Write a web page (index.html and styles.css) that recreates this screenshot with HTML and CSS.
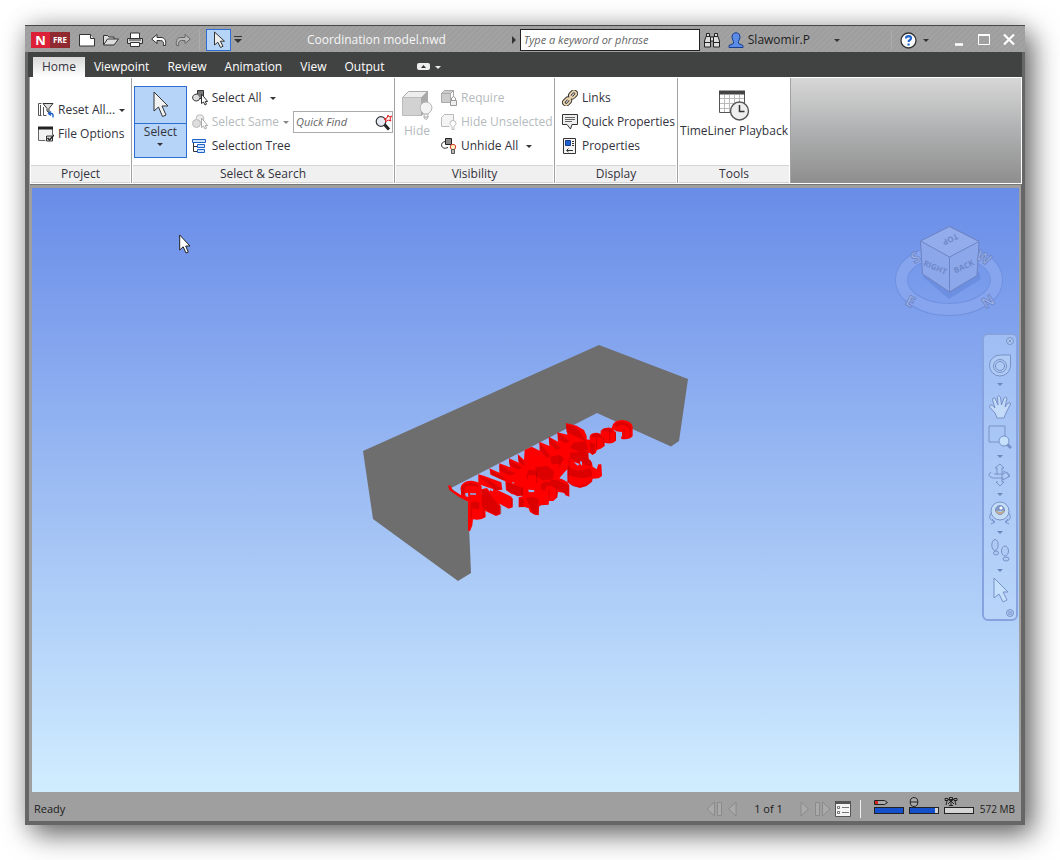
FILE: index.html
```html
<!DOCTYPE html>
<html lang="en">
<head>
<meta charset="utf-8">
<title>Coordination model.nwd</title>
<link rel="stylesheet" href="styles.css">
</head>
<body>
<div class="window">
  <header class="titlebar">
    <div class="logo"><b>N</b><span>FRE</span></div>
    <div class="quick">
      <button aria-label="New"><svg width="16" height="16" viewBox="0 0 16 16"><path d="M.5 2.500h11l4 4v7.500h-15z" fill="#fff" stroke="#333"/><path d="M11.500 2.500v4h4" fill="#ddd" stroke="#333"/></svg></button>
      <button aria-label="Open"><svg width="16" height="16" viewBox="0 0 16 16"><path d="M.5 12.500v-9h4l1.500 1.500h5v2" fill="#ddd" stroke="#333"/><path d="M.5 13l4-6h11l-4.500 6z" fill="#ddd" stroke="#333"/></svg></button>
      <button aria-label="Print"><svg width="16" height="16" viewBox="0 0 16 16"><path d="M3.500 6v-5h9v5" fill="#fff" stroke="#333"/><path d="M.5 6.500h15v5h-15z" fill="#ddd" stroke="#333"/><path d="M3.500 10.500h9v4h-9z" fill="#fff" stroke="#333"/><path d="M2 8h12" stroke="#333"/></svg></button>
      <button aria-label="Undo"><svg width="16" height="16" viewBox="0 0 16 16"><path d="M.7 7L6 2.500v3h4c3.500 0 5.500 3 4.500 8h-2c.5-3-.5-5-3-5H6v3z" fill="#fff" stroke="#333"/></svg></button>
      <button aria-label="Redo"><svg width="16" height="16" viewBox="0 0 16 16"><path d="M15.300 7L10 2.500v3H6c-3.500 0-5.500 3-4.500 8h2c-.5-3 .5-5 3-5H10v3z" fill="#bbb" stroke="#666"/></svg></button>
      <i class="bar-sep"></i>
      <button class="picked" aria-label="Select"><svg width="14" height="18" viewBox="0 0 14 18"><path d="M2.500 1v13l3.300-2.800 2.700 5.300 2.500-1.200-2.600-5.100H12.500z" fill="#eee" stroke="#333"/></svg></button>
      <button class="more" aria-label="Customize"><svg width="8" height="8" viewBox="0 0 8 8"><path d="M0 .5h8" stroke="#333"/><path d="M0 3h8L4 7z" fill="#333"/></svg></button>
    </div>
    <div class="doc-title">Coordination model.nwd</div>
    <svg class="tri" width="6" height="8" viewBox="0 0 6 8"><path d="M1 0l4 4-4 4z" fill="#333"/></svg>
    <input class="search" type="text" aria-label="Search" placeholder="Type a keyword or phrase">
    <button class="find" aria-label="Find"><svg width="16" height="16" viewBox="0 0 16 16"><g fill="#ddd" stroke="#222"><path d="M2.500 4.500v-3h3v3M10.500 4.500v-3h3v3M6.500 5h3v4h-3z"/><path d="M2 4.500h4.500v10.500H.5V9zM9.500 4.500H14L15.500 9v6h-6z"/><path d="M.5 10.500h6M9.500 10.500h6"/></g></svg></button>
    <button class="user"><svg width="16" height="16" viewBox="0 0 16 16"><path d="M5.500 9.500Q3 5.500 4.500 2.500 8-1 11.500 2.500 13 5.500 10.500 9.500v2l4.500 2v2H1v-2l4.500-2z" fill="#5b8de8" stroke="#173e8d"/></svg><span>Slawomir.P</span><i class="caret"></i></button>
    <i class="bar-sep"></i>
    <button class="help" aria-label="Help"><svg width="17" height="17" viewBox="0 0 17 17"><circle cx="8.500" cy="8.500" r="7.500" fill="#fff" stroke="#333" stroke-width="1.300"/><path d="M6 6.500Q6.200 4.200 8.600 4.200 11 4.300 11 6.300 11 7.500 9.500 8.200 8.600 8.700 8.600 10M8.600 11.500v2" fill="none" stroke="#2164cc" stroke-width="2.200"/></svg><i class="caret"></i></button>
    <div class="win-buttons">
      <button aria-label="Minimize"><svg width="14" height="14" viewBox="0 0 14 14"><path d="M3 11.500h8" stroke="#fff" stroke-width="2.500"/></svg></button>
      <button aria-label="Maximize"><svg width="14" height="14" viewBox="0 0 14 14"><path d="M1.500 2.500h11v9h-11z" fill="none" stroke="#fff"/><path d="M1 2h12" stroke="#fff" stroke-width="2"/></svg></button>
      <button aria-label="Close"><svg width="14" height="14" viewBox="0 0 14 14"><path d="M2 1.500l10 10M12 1.500l-10 10" stroke="#fff" stroke-width="2.200"/></svg></button>
    </div>
  </header>

  <nav class="tabs">
    <button class="active">Home</button><button>Viewpoint</button><button>Review</button><button>Animation</button><button>View</button><button>Output</button>
    <button class="collapse" aria-label="Minimize ribbon"><svg width="24" height="8" viewBox="0 0 24 8"><rect width="13" height="7" rx="2" fill="#eee"/><path d="M4 5l2.500-3L9 5z" fill="#333"/><path d="M18 3h6l-3 3z" fill="#eee"/></svg></button>
  </nav>

  <section class="ribbon">
    <div class="panel">
      <div class="tools project">
        <div class="stack">
          <button class="tool"><svg width="16" height="16" viewBox="0 0 16 16"><path d="M3.500 1.500h-3v12h3M2.500 3v10" fill="none" stroke="#555"/><path d="M5 1.500h10L11 6.500v4l-2-1.500V6.500z" fill="#ddd" stroke="#333"/><path d="M5.500 5v8.500h3" fill="none" stroke="#555"/><path d="M13 9.500l-2.500 2 2.500 2M10.500 11.500h3q2 0 1.500 4" fill="none" stroke="#1f62c9" stroke-width="1.400"/></svg>Reset All...<i class="caret"></i></button>
          <button class="tool"><svg width="16" height="16" viewBox="0 0 16 16"><path d="M.5 1.500h14v13h-14z" fill="#f2f2f2" stroke="#666"/><path d="M0 2h15" stroke="#222" stroke-width="3"/><path d="M7 9h8.500v7H8.500L7 14z" fill="#fff"/><path d="M8.500 10h6v5h-6z" fill="#ddd" stroke="#333"/><path d="M9.500 12l2 2L16 9" fill="none" stroke="#222" stroke-width="1.500"/></svg>File Options</button>
        </div>
      </div>
      <h2>Project</h2>
    </div>
    <div class="panel">
      <div class="tools">
        <button class="big selected"><span class="big-icon"><svg width="18" height="28" viewBox="0 0 18 28"><path d="M3 1v19l4.500-4 4 9.500 3.500-1.500-4-9h6z" fill="#f2f2f2" stroke="#333"/></svg></span><span class="big-label">Select</span><i class="caret"></i></button>
        <div class="stack">
          <button class="tool"><svg width="16" height="16" viewBox="0 0 16 16"><path d="M5.500.5h6v8h-6z" fill="#777" stroke="#333"/><path d="M5 4Q0 4.500.7 8.500 2 12 6.500 10.500L8 8" fill="#ddd" stroke="#333"/><path d="M9.500 4v9.500l2-1.500 1.500 3 1.500-.8-1.300-2.700h2.500z" fill="#fff" stroke="#333"/></svg>Select All<i class="caret"></i></button>
          <div class="pair">
            <button class="tool" disabled><svg width="16" height="16" viewBox="0 0 16 16"><circle cx="8" cy="4.500" r="3.800" fill="#eee" stroke="#bbb"/><circle cx="4.500" cy="9.500" r="4" fill="#ddd" stroke="#bbb"/><path d="M9.500 4v9.500l2-1.500 1.500 3 1.500-.8-1.300-2.700h2.500z" fill="#fff" stroke="#aaa"/></svg>Select Same<i class="caret"></i></button>
            <div class="quick-find"><input type="text" aria-label="Quick Find" placeholder="Quick Find"><button aria-label="Run quick find"><svg width="17" height="17" viewBox="0 0 17 17"><path d="M9 10l5 5.500" stroke="#222" stroke-width="3"/><circle cx="6" cy="7.500" r="4.800" fill="#e6eaf2" stroke="#333" stroke-width="1.200"/><path d="M9 5l3-1 1-3 1 2 2.500-1-1.500 3 1 2-3-1-2.500 2 .5-3z" fill="#fff" stroke="#e02020"/></svg></button></div>
          </div>
          <button class="tool"><svg width="16" height="16" viewBox="0 0 16 16"><path d="M1.500 4v9.500h4M1.500 8.500h4" fill="none" stroke="#333"/><g fill="#cfe4ff" stroke="#1f62c9"><path d="M.5 1.500h13v3H.5zM5.500 6.500h7v3h-7zM5.500 11.500h7v3h-7z"/></g></svg>Selection Tree</button>
        </div>
      </div>
      <h2>Select &amp; Search</h2>
    </div>
    <div class="panel">
      <div class="tools visibility">
        <button class="big" disabled><span class="big-icon"><svg width="32" height="32" viewBox="0 0 32 32"><path d="M1.500 8.500l6-6h19l-6 6z" fill="#eee" stroke="#aaa"/><path d="M1.500 8.500h19v18h-19z" fill="#d2d2d2" stroke="#bbb"/><path d="M20.500 8.500l6-6v18l-6 6z" fill="#aaa" stroke="#aaa"/><path d="M23 25q-4-3-4-6a6 6 0 0 1 12 0q0 3-4 6v4q-2 3-4 0z" fill="#f3f3f3" stroke="#b5b5b5"/><path d="M23 25h4M23 28h4" stroke="#aaa"/></svg></span><span class="big-label">Hide</span></button>
        <div class="stack">
          <button class="tool" disabled><svg width="16" height="16" viewBox="0 0 16 16"><path d="M.5 3.500l3-3h9l-3 3zM.5 3.500h9v9h-9z" fill="#ccc" stroke="#aaa"/><path d="M9.500 3.500l3-3v6" fill="none" stroke="#aaa"/><path d="M10.500 10V8q2-3 4 0v2" fill="none" stroke="#999"/><path d="M9.500 10.500h6v5h-6z" fill="#eee" stroke="#999"/></svg>Require</button>
          <button class="tool" disabled><svg width="16" height="16" viewBox="0 0 16 16"><path d="M8.500 12.500h-8v-9l3-3h9v6" fill="#f4f4f4" stroke="#bbb"/><path d="M11 12.500q-2-2-2-3a3 3 0 0 1 6 0q0 1-2 3v3h-2z" fill="#fff" stroke="#bbb"/></svg>Hide Unselected</button>
          <button class="tool"><svg width="16" height="16" viewBox="0 0 16 16"><path d="M4.500.5h6v6h-6z" fill="#888" stroke="#222"/><path d="M4 3.500Q0 4.500.6 8 2 11.500 7 9.500" fill="none" stroke="#333"/><circle cx="12" cy="9" r="2.700" fill="#fff3c0" stroke="#d23b2a"/><path d="M10.500 11.500h3v4h-3z" fill="#bbb" stroke="#555"/></svg>Unhide All<i class="caret"></i></button>
        </div>
      </div>
      <h2>Visibility</h2>
    </div>
    <div class="panel">
      <div class="tools display">
        <div class="stack">
          <button class="tool"><svg width="16" height="16" viewBox="0 0 16 16"><g fill="none" stroke="#333" stroke-width="3.600"><rect x="7.500" y="2.300" width="7" height="4.500" rx="2.200" transform="rotate(-45 11 4.500)"/><rect x="1.500" y="9.300" width="7" height="4.500" rx="2.200" transform="rotate(-45 5 11.500)"/><path d="M6 10l4-4"/></g><g fill="none" stroke="#ecd6b0" stroke-width="1.800"><rect x="7.500" y="2.300" width="7" height="4.500" rx="2.200" transform="rotate(-45 11 4.500)"/><rect x="1.500" y="9.300" width="7" height="4.500" rx="2.200" transform="rotate(-45 5 11.500)"/><path d="M6 10l4-4"/></g></svg>Links</button>
          <button class="tool"><svg width="16" height="16" viewBox="0 0 16 16"><path d="M.5.500h15v10H10L8.500 15 5 10.500H.5z" fill="#eee" stroke="#333"/><path d="M3 3.500h10M3 5.500h10M3 7.500h7" stroke="#666"/></svg>Quick Properties</button>
          <button class="tool"><svg width="16" height="16" viewBox="0 0 16 16"><path d="M1.500.500h12v15h-12z" fill="#f4f4f4" stroke="#333"/><path d="M3.500 2.500h5v5h-5z" fill="#1f5fd0" stroke="#173e8d"/><path d="M10 3.500h2M10 5.500h2M10 7.500h2M5 12.500h6M6.500 10.500l-2 2 2 1.500" fill="none" stroke="#333"/></svg>Properties</button>
        </div>
      </div>
      <h2>Display</h2>
    </div>
    <div class="panel">
      <div class="tools timeliner">
        <button class="big"><span class="big-icon"><svg width="32" height="32" viewBox="0 0 32 32"><path d="M1.500 2.500h25v21h-25z" fill="#fff" stroke="#555"/><path d="M1 3.500h26" stroke="#444" stroke-width="4"/><path d="M2 9.500h24M2 14.500h24M2 19.500h24M6.500 6v17M11.500 6v17M16.500 6v17M21.500 6v17" stroke="#bbb"/><circle cx="21.500" cy="22" r="9" fill="#eee" stroke="#555" stroke-width="1.400"/><path d="M21.500 16v6.500h5" fill="none" stroke="#333" stroke-width="1.500"/></svg></span><span class="big-label">TimeLiner Playback</span></button>
      </div>
      <h2>Tools</h2>
    </div>
    <div class="filler"></div>
  </section>

  <main class="view">
    <svg class="scene" viewBox="32 188 987 604" role="img" aria-label="3D model">
      <path fill="#6e6e6e" d="M363 451L599 345 688 379 679 441 671 446.500 597 413 451 488 468 502 471 573 458 581 373 519z"/>
      <g transform="translate(440 410) scale(.33333)">
        <g fill="#f00">
          <path d="M24 226l8 1 5 12 26 16V228q8-16 32-16 26 2 30 18l-1 20 8 7 3 22 2 42q-16 12-38 7l-2 18-7 18-6-3V275L52 258 28 240z"/>
          <path d="M115 193l16 4 53 20 3 22-19 2-53-19z"/>
          <path d="M123 238l18-4 40 52v27l-13 5-38-18zM155 232l59 28 4 6v26l-12 4-64-34z"/>
          <path d="M148 175L178 188V160L210 172 207 145 237 158 233 132 252 150 254 120 275 110 299 122 298 95 328 108 326 80 354 95 352 67 382 74 378 39 410 47 432 60 440 78V88L450 90 466 100 470 122 458 134 448 128 444 130 446 146 456 158 458 170 470 178 475 163 484 163 486 198 476 205 458 206 456 215 440 228 420 234 395 226 382 215 380 180 360 203 382 216 388 226V260L376 256 374 248 354 246 352 262 340 273 327 273 326 284 303 286 297 290 296 316 284 314 270 306 266 295 252 290 236 292V262L250 258 215 252 198 240 196 214 152 194z"/>
          <path d="M449 100V80q2-12 22-12l23 8v32q-13 11-24 12l-2 8-10 6-6-7-6-24zM482 72V62q16-14 34-8l12 14v24q-12 12-32 7L482 88zM516 51q4-21 31-21 29 3 31 20v28q-10 13-34 9l-4-21-10-2-14-8z"/>
        </g>
        <g fill="#dc0000">
          <path d="M66 229q10-12 30-10 20 2 22 13-22-10-44 0l-1 24-8-2zM115 197l30 12 40 28-18 4zM124 240l15-1 40 50v23l-12 4-40-23zM150 179l48 28-8 4-38-18zM178 164l50 28-20 4-28-14zM207 149l40 24-14 6-24-14zM235 136l18 20v14l-18-16zM299 98l32 40-10 6-20-22zM328 81l34 34-14 4-20-20zM354 68l36 26-14 6-22-14zM378 43q42 8 54 42l8 10-18-9-42-20z"/>
          <path d="M400 98l38-4 6 26-22 6-32-12zM390 128l55-4v34l-30 0-24-14zM330 140l30-6 14 13-13 15-26 1zM286 172l36-4 20 16-3 22-30 6-24-16zM199 217l20 6 28 10 3 23-18 3-32-18zM258 264l21-4 17 8-1 46-16-3-10-22zM332 208l26 4 28 16v29l-10-5-20-13-28-14zM382 170q30 19 68 5l6 14v10q-28 12-72-4zM238 263l13 5v24l-14-2z"/>
          <path d="M455 74q17-8 31 3v8q-18-8-31-1zM487 57q17-6 30 4v8q-16-8-29-4zM523 43q13-13 35-5 15 6 12 20l-8-8q-17-10-32 1zM448 95l18 8-2 27-8 4-5-10zM302 224q16-16 34-5 14 2 18 15-14-11-36-4l-2 12-14-4zM263 181q13-5 24 3l-2 12-22-1zM93 276q13-4 26 4l-3 18-24-3zM434 152q15-8 20 4v12l-20-4z"/>
        </g>
        <path fill="#8fb2f0" d="M75 250l9-2 1 13-8-2zM90 250h18v4H90zM152 235l8 2-1 7-6-2zM264 239l18 1 1 6-16 1zM358 205l24-27v34zM401 156l18 6-6 5zM420 153l6 2v12l-5-5zM216 216l8 2-5 3zM538 65l8 1v13l-7 5z"/>
        <path fill="none" stroke="#a80000" stroke-width="1.500" d="M62 232q-1 17 14 20M94 296v30M131 298v24M182 288v24M216 266v26M247 232v24M290 184v35M262 190v16M327 238v30M349 231v33M385 169v48q30 30 69-5M360 141v33M388 144v30M470 82v35M490 82v25M509 62v34M526 65v24M552 57v29M571 52v28"/>
      </g>
    </svg>

    <svg class="pointer" width="12" height="20" viewBox="0 0 12 20"><path d="M.7 1v15l3.500-3.200L7 19l2.300-1-2.600-6H11z" fill="#fff" stroke="#222"/></svg>

    <svg class="cube" width="110" height="92" viewBox="894 225 110 92" role="img" aria-label="View cube">
      <ellipse cx="949" cy="280" rx="47.500" ry="29.500" fill="none" stroke="#6f91df" stroke-width="13"/>
      <ellipse cx="949" cy="280" rx="47.500" ry="29.500" fill="none" stroke="#87a5ee" stroke-width="11"/>
      <path d="M923 277l26 22 32-20-2-7-54-4z" fill="#5d81d5" opacity=".5"/>
      <path d="M949.500 226.500l29.500 15-2 34-27.500 16.500-27-18-2-32z" fill="#8da8ea" stroke="#6c83c4"/>
      <path d="M949.500 226.500l29.500 15-29.500 15.500-29-16z" fill="#93adec" stroke="#6c83c4"/><path d="M949.500 257v35" stroke="#6c83c4"/>
      <g fill="#6f88ca" class="cube-text"><text transform="translate(934 270) rotate(23)">RIGHT</text><text transform="translate(965 269) rotate(-25)">BACK</text><text transform="translate(949 237) rotate(153)">TOP</text></g>
      <g fill="#9db2e8" stroke="#6a83c6" stroke-width=".8" class="compass"><text transform="translate(908 306) rotate(28)">E</text><text transform="translate(991 306) rotate(-32)">N</text><text transform="translate(918 262) rotate(-30)">S</text><text transform="translate(981 262) rotate(30)">W</text></g>
    </svg>

    <div class="navbar">
      <button class="mini" aria-label="Close bar"><svg width="8" height="8" viewBox="0 0 8 8"><circle cx="4" cy="4" r="3.500"/><path d="M2.500 2.500l3 3M5.500 2.500l-3 3"/></svg></button>
      <button class="wheel" aria-label="Steering wheel"><svg width="24" height="24" viewBox="0 0 24 24"><path d="M12 1h10.500v11A10.500 10.500 0 1 1 12 1z"/><circle cx="12" cy="12" r="6.500"/><circle cx="12" cy="12" r="4.500"/></svg></button><i class="nav-caret"></i>
      <button class="pan" aria-label="Pan"><svg width="24" height="26" viewBox="0 0 24 26"><path d="M7 19L1.500 13q0-3 3-1.500L7 14 4.500 6q0-3 2.500-2L10 11 9.500 3q1-3 3 0l1 8L16 4q2-2 3 0l-2 9 3-4q3-1 2.500 1l-4.500 9-2 5H9z" fill="#c3daf8"/></svg></button>
      <button aria-label="Zoom window"><svg width="24" height="24" viewBox="0 0 24 24"><path d="M1 1h16v16H1z" fill="none"/><path d="M18 18l5 5" stroke-width="3"/><circle cx="16" cy="16" r="5" fill="#c5e0fa"/></svg></button><i class="nav-caret"></i>
      <button aria-label="Orbit"><svg width="24" height="24" viewBox="0 0 24 24"><path d="M9 12V5H7l5-4 4 4h-2v14h2l-4 4-4-4h2M3 9q-5 4 2 6h10v2l7-4-6-5v3H6M18 9q6 3 1 6" /></svg></button><i class="nav-caret"></i>
      <button aria-label="Look"><svg width="26" height="24" viewBox="0 0 26 24"><path d="M5 11q-6 7 3 10M5 18l3 3-4 2M21 11q6 7-3 10M21 18l-3 3 4 2" fill="none"/><circle cx="13" cy="10" r="9" fill="#c5dcf7"/><circle cx="13" cy="9" r="4.500" fill="#839bc5"/><path d="M9 10q4 5 8 0" stroke="#bda889" stroke-width="2"/><circle cx="14" cy="7" r="1.500" fill="#fff" stroke="none"/></svg></button><i class="nav-caret"></i>
      <button aria-label="Walk"><svg width="24" height="24" viewBox="0 0 24 24"><ellipse cx="7" cy="6" rx="3.200" ry="5.500"/><ellipse cx="8" cy="14" rx="2.500" ry="2"/><ellipse cx="17" cy="12" rx="3.500" ry="5"/><ellipse cx="18" cy="20" rx="3" ry="2"/></svg></button><i class="nav-caret"></i>
      <button aria-label="Select"><svg width="24" height="26" viewBox="0 0 24 26"><path d="M6 1v20l5-4 4 8 4-2-4-8h5z" fill="#c5e0fa"/></svg></button>
      <button class="mini" aria-label="Options"><svg width="8" height="8" viewBox="0 0 8 8"><circle cx="4" cy="4" r="3.500"/><path d="M2 3h4M2 5h4"/></svg></button>
    </div>
  </main>

  <footer class="status">
    <span class="ready">Ready</span>
    <div class="sheets">
      <button aria-label="First sheet"><svg width="16" height="16" viewBox="0 0 16 16"><path d="M8.500 1v14L1 8zM11.500 1.500h4v13h-4z"/></svg></button>
      <button aria-label="Previous sheet"><svg width="10" height="16" viewBox="0 0 10 16"><path d="M9 1v14L1.500 8z"/></svg></button>
      <span class="page">1 of 1</span>
      <button aria-label="Next sheet"><svg width="10" height="16" viewBox="0 0 10 16"><path d="M1 1v14L8.500 8z"/></svg></button>
      <button aria-label="Last sheet"><svg width="16" height="16" viewBox="0 0 16 16"><path d="M7.500 1v14L15 8zM.5 1.500h4v13h-4z"/></svg></button>
    </div>
    <button class="browser" aria-label="Sheet browser"><svg width="16" height="16" viewBox="0 0 16 16"><path d="M.5.500h15v15H.5z" fill="#f4f4f4" stroke="#555"/><path d="M0 1.500h16" stroke="#555" stroke-width="3"/><path d="M2.500 5.500h2v2h-2zM2.500 10.500h2v2h-2z" fill="#fff" stroke="#777"/><path d="M7 6.500h7M7 11.500h7" stroke="#777"/></svg></button>
    <i class="status-sep"></i>
    <div class="meters">
      <div class="meter"><svg width="14" height="10" viewBox="0 0 14 10"><path d="M.5 3.500h10l3 2-3 2H.5z" fill="#aaa" stroke="#222"/><path d="M1 4h3v3H1z" fill="#d22"/></svg><span><b style="width:100%"></b></span></div>
      <div class="meter"><svg width="14" height="10" viewBox="0 0 14 10"><ellipse cx="5" cy="5" rx="3.800" ry="4.400" fill="#aaa" stroke="#222"/><path d="M1 5h8" stroke="#222"/></svg><span><b style="width:90%"></b></span></div>
      <div class="meter"><svg width="14" height="10" viewBox="0 0 14 10"><path d="M1 1.500h3v2H1zM5.500.500h3v3h-3zM10 1.500h3v2h-3zM4 2.500h6M7 3v6M3 4l-1 4M11 4l1 4M7 4L4 7M7 4l3 3M5 8.500h4" fill="none" stroke="#222"/></svg><span><b style="width:0%"></b></span></div>
    </div>
    <span class="memory">572 MB</span>
  </footer>
</div>
</body>
</html>
```

FILE: styles.css
```css
* { box-sizing: border-box; }

body {
  margin: 0;
  min-height: 100vh;
  padding: 25px 35px 35px 25px;
  display: flex;
  background: #fff;
  font: 12px/16px "Open Sans", "Noto Sans", sans-serif;
  color: #33333d;
}

button {
  border: 0;
  padding: 0;
  background: none;
  font: inherit;
  color: inherit;
  display: flex;
  align-items: center;
}

svg { display: block; flex: none; }

.window {
  flex: 1;
  display: flex;
  flex-direction: column;
  background: #9f9f9f;
  border: solid #666;
  border-width: 0 4px 4px;
  box-shadow: 8px 10px 26px rgba(0, 0, 0, .55), 0 0 22px rgba(0, 0, 0, .18);
}

.caret {
  flex: none;
  border: 3px solid transparent;
  border-top-color: #333;
  border-bottom: 0;
}

/* Title bar */
.titlebar {
  display: flex;
  align-items: center;
  height: 27px;
  margin: 0 -4px;
  padding: 2px 9px 0 6px;
  border-top: 1px solid #484848;
  background: repeating-linear-gradient(135deg, #a2a2a2 0 2px, #9e9e9e 2px 4px);
}

.logo {
  display: flex;
  align-items: center;
  height: 16px;
  width: 39px;
  color: #fff;
  background: #8e2a30;
}

.logo b { width: 19px; background: #dc2038; text-align: center; font-size: 13px; line-height: 16px; }
.logo span { flex: 1; text-align: center; font-size: 8px; font-weight: 700; }

.quick { display: flex; align-items: center; gap: 8px; margin-left: 9px; }
.bar-sep { width: 1px; height: 20px; background: #adadad; }
.quick .bar-sep { margin: 0 -2px 0 0; }

.picked {
  width: 25px;
  height: 22px;
  justify-content: center;
  border: 1px solid #2c6fd0;
  background: #b5d4f8;
}

.quick .more { margin-left: -5px; }
.doc-title { flex: 1; text-align: center; color: #f6f6f6; }
.tri { margin-right: 3px; }

.search {
  width: 180px;
  height: 22px;
  padding: 0 3px 2px;
  border: 1px solid #222;
  border-radius: 0;
  background: #fff;
  font: italic 11px/16px "Open Sans", "Noto Sans", sans-serif;
}

input::placeholder { color: #666; opacity: 1; }

.find { margin-left: 4px; }
.user { margin-left: 8px; gap: 4px; color: #222; }
.user .caret { margin-left: 20px; }
.titlebar > .bar-sep { margin-left: 51px; }
.help { margin-left: 8px; gap: 6px; }
.win-buttons { display: flex; gap: 11px; margin-left: 23px; }

/* Ribbon tabs */
.tabs {
  display: flex;
  height: 25px;
  padding: 5px 0 0 4px;
  margin: 0 -1px;
  background: #414342;
  color: #fff;
}

.tabs button { padding: 0 9px; }
.tabs .active { background: linear-gradient(#d9d9d9, #fff); color: #33333d; margin-left: 1px; }
.tabs .collapse { margin-left: 15px; }

/* Ribbon */
.ribbon {
  display: grid;
  grid-template-columns: 102px 263px 160px 123px 113px 1fr;
  margin: 0 -1px 4px 1px;
  border: solid #fff;
  border-width: 1px 1px 1px 0;
  background: #fff;
  box-shadow: 0 1px #777;
}

.panel { display: flex; flex-direction: column; border-right: 1px solid #a2a2a2; min-width: 0; }
.filler { background: linear-gradient(#d7d7d7, #b1b2b3 48%, #8e8e8e); }

.panel h2 {
  margin: 0 1px;
  border: solid #d4d4d4;
  border-width: 1px 0;
  background: #f0f0f0;
  font-size: 12px;
  line-height: 16px;
  font-weight: 400;
  text-align: center;
}

.tools { display: flex; height: 87px; padding: 8px 2px 0; gap: 5px; }
.stack { display: flex; flex-direction: column; min-width: 0; }
.project { padding: 20px 0 0 8px; }
.display { padding-left: 7px; }
.visibility { gap: 4px; }
.timeliner { padding-left: 0; padding-right: 0; justify-content: center; }
.tool { height: 24px; gap: 4px; white-space: nowrap; }
.tool .caret { margin-left: 4px; }
.project .caret, .pair .caret { margin-left: 0; }
.tool:disabled, .big:disabled { color: #b4babd; }
.tool:disabled .caret { border-top-color: #888; }
.pair { display: flex; align-items: center; gap: 4px; }

.quick-find {
  display: flex;
  align-items: center;
  width: 100px;
  height: 22px;
  border: 1px solid #ababab;
  background: #fff;
}

.quick-find input {
  flex: 1;
  min-width: 0;
  padding: 0 2px;
  border: 0;
  background: none;
  font: italic 11px/16px "Open Sans", "Noto Sans", sans-serif;
}

.big { flex-direction: column; height: 72px; min-width: 40px; }
.big-icon { display: flex; align-items: center; justify-content: center; height: 37px; width: 100%; }
.big-label { white-space: nowrap; }
.selected { width: 53px; border: 1px solid #2c6fd0; background: #b5d4f8; }
.selected .big-icon { border-bottom: 1px solid #2c6fd0; }
.selected .caret { margin-top: 3px; }

/* Model view */
.view {
  flex: 1;
  position: relative;
  min-height: 400px;
  margin: 0 2px 0 3px;
  background: linear-gradient(#698ce8, #d0edff);
}

.scene { position: absolute; inset: 0; width: 100%; height: 100%; }
.pointer { position: absolute; left: 147px; top: 46px; }
.cube { position: absolute; right: 15px; top: 37px; }
.cube-text { font-size: 8px; font-weight: 700; text-anchor: middle; }
.compass { font-size: 15px; font-weight: 700; text-anchor: middle; }

.navbar {
  position: absolute;
  right: 1px;
  top: 145px;
  width: 36px;
  height: 288px;
  display: flex;
  flex-direction: column;
  align-items: center;
  justify-content: space-between;
  padding: 2px 0;
  border: 2px solid #86a3df;
  border-radius: 6px;
  background: rgba(190, 215, 250, .5);
}

.navbar svg { fill: #afcaf4; stroke: #7892c9; }
.navbar .mini { align-self: flex-end; margin-right: 2px; }
.navbar .wheel { margin-top: 3px; }
.navbar .pan { margin-top: 2px; }
.nav-caret { border: 3px solid transparent; border-top-color: #6d87bd; border-bottom: 0; }

/* Status bar */
.status {
  display: flex;
  align-items: center;
  height: 29px;
  padding: 4px 6px 0 5px;
  color: #1c1c1c;
  font-size: 11px;
}

.ready { flex: 1; }
.sheets { display: flex; align-items: center; gap: 5px; }
.sheets svg { fill: #aaa; stroke: #8a8a8a; }
.page { padding: 0 12px; }
.browser { margin-left: 4px; }
.status-sep { width: 1px; height: 18px; margin: 0 13px 0 9px; background: #eee; }
.meters { display: flex; gap: 5px; margin-top: -6px; }
.meter span { display: block; width: 30px; height: 7px; border: 1px solid #222; background: #d4d4d4; }
.meter b { display: block; height: 5px; background: #1450cc; }
.memory { margin-left: 6px; font-size: 10px; }
```
